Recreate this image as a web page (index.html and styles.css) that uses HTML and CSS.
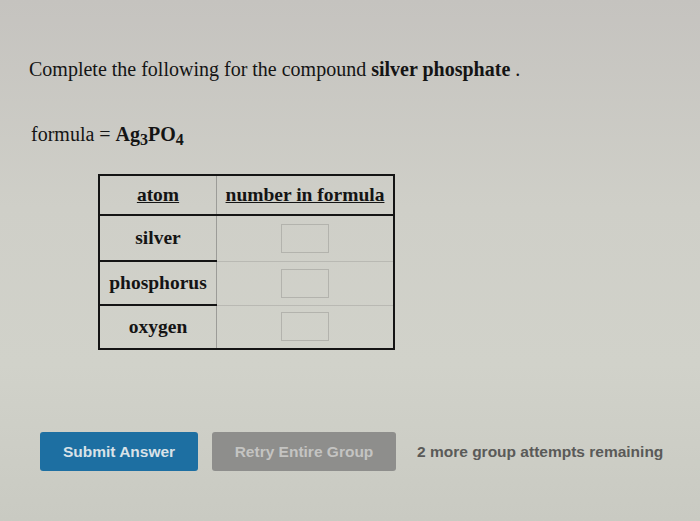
FILE: index.html
```html
<!DOCTYPE html>
<html>
<head>
<meta charset="utf-8">
<link rel="stylesheet" href="styles.css">
</head>
<body>
<div class="page">
  <p class="question">Complete the following for the compound <b>silver phosphate</b> .</p>
  <p class="formula">formula = <b>Ag<sub>3</sub>PO<sub>4</sub></b></p>
  <table class="atoms">
    <tr class="head">
      <th class="atom"><u>atom</u></th>
      <th class="num"><u>number in formula</u></th>
    </tr>
    <tr class="first">
      <td class="atom">silver</td>
      <td class="num"><span class="box"></span></td>
    </tr>
    <tr>
      <td class="atom">phosphorus</td>
      <td class="num"><span class="box"></span></td>
    </tr>
    <tr class="last">
      <td class="atom">oxygen</td>
      <td class="num"><span class="box"></span></td>
    </tr>
  </table>
  <div class="actions">
    <button class="btn submit">Submit Answer</button>
    <button class="btn retry">Retry Entire Group</button>
    <span class="remain">2 more group attempts remaining</span>
  </div>
</div>
</body>
</html>
```
FILE: styles.css
```css
html, body {
  margin: 0;
  padding: 0;
  height: 100%;
}
body {
  background: linear-gradient(180deg, #c5c3bf 0%, #cfcfc8 40%, #d1d2ca 70%, #c9cac2 100%);
  font-family: "Liberation Serif", "Times New Roman", serif;
  color: #141414;
  overflow: hidden;
}
.page {
  padding: 56px 0 0 29px;
}
.question {
  margin: 0;
  font-size: 20px;
  line-height: 26px;
}
.formula {
  margin: 39px 0 0 2px;
  font-size: 20px;
  line-height: 26px;
}
.formula sub {
  font-size: 0.8em;
  vertical-align: -4px;
  line-height: 0;
}
.atoms {
  margin: 27px 0 0 69px;
  border-collapse: collapse;
  border: 2px solid #141414;
  font-size: 19.5px;
}
.atoms th, .atoms td {
  padding: 0;
  text-align: center;
  font-weight: bold;
}
.atoms .atom {
  width: 116px;
  border-right: 1px solid #9c9c98;
  border-bottom: 2px solid #141414;
}
.atoms .num {
  width: 176px;
  border-bottom: 1px solid #b9b9b3;
}
.atoms .head th {
  height: 38px;
  border-bottom: 2px solid #141414;
}
.atoms .head th.atom {
  border-right: 1px solid #9c9c98;
}
.atoms tr td {
  height: 42px;
}
.atoms tr.first td {
  height: 44px;
}
.atoms tr.last td {
  border-bottom: none;
}
.box {
  display: inline-block;
  width: 46px;
  height: 27px;
  border: 1px solid #b3b3ad;
  vertical-align: middle;
}
.actions {
  display: flex;
  align-items: center;
  margin: 82px 0 0 11px;
}
.btn {
  font-family: "Liberation Sans", Arial, sans-serif;
  font-weight: bold;
  font-size: 15.5px;
  border: none;
  border-radius: 3px;
  height: 39px;
  padding: 0;
}
.submit {
  width: 158px;
  background: #1d6fa2;
  color: #d9e2e8;
}
.retry {
  width: 184px;
  margin-left: 14px;
  background: #8e8e8c;
  color: #c4c4c2;
}
.remain {
  margin-left: 21px;
  font-family: "Liberation Sans", Arial, sans-serif;
  font-weight: bold;
  font-size: 15.5px;
  color: #5a5a58;
}
```
